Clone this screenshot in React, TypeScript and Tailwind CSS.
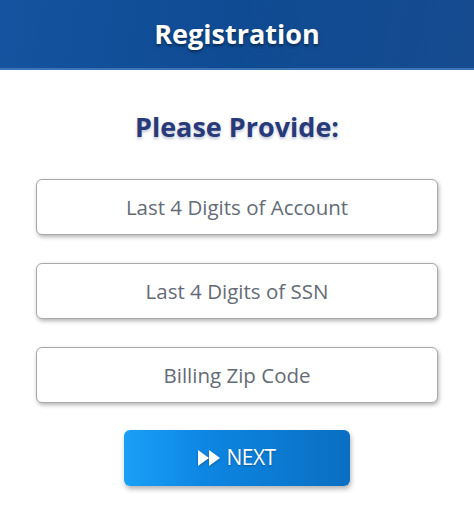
const fields = ["Last 4 Digits of Account", "Last 4 Digits of SSN", "Billing Zip Code"];

export default function App() {
  return (
    <div className="h-[507px] w-[474px] overflow-hidden bg-white font-['Open_Sans',sans-serif]">
      <header className="flex h-[70px] items-center justify-center border-b-[2px] border-b-[#3a75b8] bg-[linear-gradient(100deg,#1553a0_0%,#0f4b93_50%,#164b8f_100%)]">
        <h1 className="text-[27px] font-bold text-white [text-shadow:0_2px_3px_rgba(0,0,0,0.45)]">Registration</h1>
      </header>

      <main className="flex flex-col items-center">
        <h2 className="mt-[37px] text-[27px] font-bold text-[#283a78] [text-shadow:0_2px_3px_rgba(40,58,120,0.3)]">
          Please Provide:
        </h2>

        <div className="mt-[31px] flex w-[402px] flex-col gap-[28px]">
          {fields.map((f) => (
            <input
              key={f}
              placeholder={f}
              className="h-[56px] w-full rounded-[6px] border border-[#a9a9a9] bg-white text-center text-[20.5px] text-[#646b76] shadow-[1px_2px_4px_rgba(0,0,0,0.3)] outline-none placeholder:text-[#646b76]"
            />
          ))}
        </div>

        <button className="mt-[27px] flex h-[56px] w-[226px] items-center justify-center gap-[6px] rounded-[6px] bg-[linear-gradient(90deg,#1aa0f7_0%,#0d86e3_35%,#0a6fc2_100%)] text-[21px] tracking-[-0.5px] text-white shadow-[1px_3px_5px_rgba(0,0,0,0.3)]">
          <svg width="22" height="16" viewBox="0 0 22 16" className="drop-shadow-[0_1px_1px_rgba(0,0,0,0.3)]">
            <path d="M0 0 L11 8 L0 16 Z M11 0 L22 8 L11 16 Z" fill="white" />
          </svg>
          <span className="[text-shadow:0_1px_2px_rgba(0,0,0,0.3)]">NEXT</span>
        </button>
      </main>
    </div>
  );
}
